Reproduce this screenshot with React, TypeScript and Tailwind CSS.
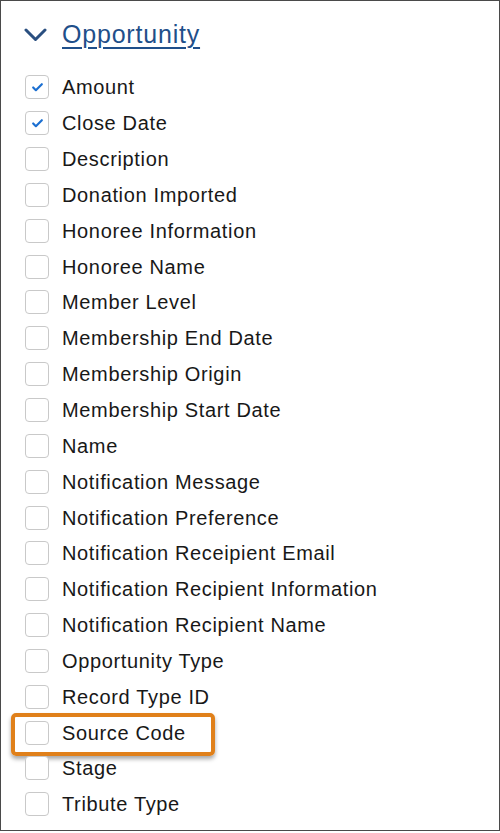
import { Check } from 'lucide-react';

const fields = [
  { label: 'Amount', checked: true },
  { label: 'Close Date', checked: true },
  { label: 'Description' },
  { label: 'Donation Imported' },
  { label: 'Honoree Information' },
  { label: 'Honoree Name' },
  { label: 'Member Level' },
  { label: 'Membership End Date' },
  { label: 'Membership Origin' },
  { label: 'Membership Start Date' },
  { label: 'Name' },
  { label: 'Notification Message' },
  { label: 'Notification Preference' },
  { label: 'Notification Receipient Email' },
  { label: 'Notification Recipient Information' },
  { label: 'Notification Recipient Name' },
  { label: 'Opportunity Type' },
  { label: 'Record Type ID' },
  { label: 'Source Code', highlight: true },
  { label: 'Stage' },
  { label: 'Tribute Type' },
];

type Field = { label: string; checked?: boolean; highlight?: boolean };

function FieldRow({ field }: { field: Field }) {
  return (
    <div className="relative flex h-[35.85px] items-center gap-[13px] pl-[24px]">
      {/* orange callout around the highlighted row */}
      {field.highlight && (
        <div className="absolute left-[10px] top-[-2px] h-[43px] w-[204px] rounded-[5px] border-4 border-[#e0801a] shadow-[0_3px_4px_rgba(0,0,0,0.35)]" />
      )}
      <div className="flex h-[24px] w-[24px] shrink-0 items-center justify-center rounded-[4px] border border-[#c9c9c9] bg-white">
        {field.checked && <Check className="h-[13px] w-[13px] text-[#1b6fd1]" strokeWidth={4} />}
      </div>
      <span className="text-[20px] tracking-[0.65px] text-[#181818]">{field.label}</span>
    </div>
  );
}

export default function App() {
  return (
    <div className="h-[833px] w-[500px] bg-white" style={{ fontFamily: '"Liberation Sans", Arial, sans-serif' }}>
      <div className="h-[831px] w-[500px] border-[1.5px] border-[#4a4a4a] bg-white">
        {/* Section header */}
        <div className="flex items-center gap-[15px] pl-[23px] pt-[15px]">
          <svg width="23" height="14" viewBox="0 0 23 14" fill="none" className="text-[#2a4f80]">
            <polyline points="2,2 11.5,11.5 21,2" stroke="currentColor" strokeWidth="3" strokeLinecap="round" strokeLinejoin="round" />
          </svg>
          <a href="#" className="text-[25px] tracking-[0.8px] text-[#1f4f8a] underline decoration-[1.5px] underline-offset-[4px]">
            Opportunity
          </a>
        </div>

        {/* Field list */}
        <div className="mt-[16px] flex flex-col">
          {fields.map((f) => (
            <FieldRow key={f.label} field={f} />
          ))}
        </div>
      </div>
    </div>
  );
}
